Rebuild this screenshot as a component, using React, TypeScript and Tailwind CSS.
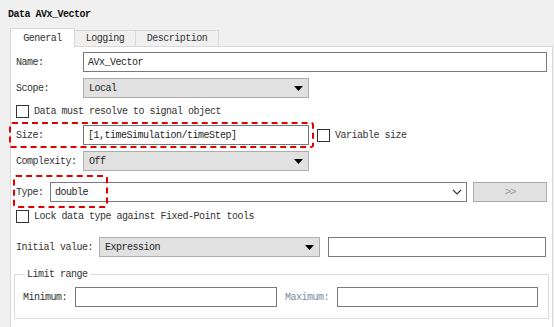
import { ReactNode } from 'react';

const mono = "font-['Liberation_Mono','DejaVu_Sans_Mono',monospace] text-[10px] tracking-[-0.5px]";

function Caret() {
  return (
    <svg width="9" height="5" viewBox="0 0 9 5" className="shrink-0">
      <path d="M0 0 H9 L4.5 5 Z" fill="#000" />
    </svg>
  );
}

function Chevron() {
  return (
    <svg width="10" height="6" viewBox="0 0 10 6" className="shrink-0">
      <path d="M1 1 L5 5 L9 1" fill="none" stroke="#333" strokeWidth="1.1" />
    </svg>
  );
}

function Select({ value, width }: { value: string; width: string }) {
  return (
    <div className={`${width} h-[20px] bg-[#e1e1e1] border border-[#adadad] flex items-center justify-between pl-[5px] pr-[5px] text-[#1f1f1f]`}>
      <span>{value}</span>
      <Caret />
    </div>
  );
}

function Input({ value, width }: { value?: string; width: string }) {
  return (
    <div className={`${width} h-[20px] bg-white border border-[#7a7a7a] flex items-center pl-[4px] text-[#1f1f1f]`}>
      {value}
    </div>
  );
}

function Check({ label }: { label: string }) {
  return (
    <div className="flex items-center h-[13px]">
      <div className="w-[13px] h-[13px] border border-[#333] bg-white" />
      <span className="ml-[5px] text-[#333]">{label}</span>
    </div>
  );
}

function Row({ label, children, mt }: { label: string; children: ReactNode; mt: string }) {
  return (
    <div className={`flex items-center ${mt}`}>
      <span className="w-[67px] text-[#333]">{label}</span>
      {children}
    </div>
  );
}

export default function App() {
  return (
    <div className={`w-[554px] h-[327px] bg-[#f0f0f0] overflow-hidden relative ${mono}`}>
      <div className="h-[28px] pl-[8px] pt-[7px] font-bold text-[#111]">Data AVx_Vector</div>

      {/* Tabs */}
      <div className="flex items-end h-[18px] pl-[10px] relative z-10">
        <div className="w-[65px] h-[19px] bg-white border border-b-0 border-[#d9d9d9] flex items-center justify-center text-[#333] -mb-px">
          General
        </div>
        <div className="w-[61px] h-[16px] border border-l-0 border-b-0 border-[#d9d9d9] flex items-center justify-center text-[#333]">
          Logging
        </div>
        <div className="w-[83px] h-[16px] border border-l-0 border-b-0 border-[#d9d9d9] flex items-center justify-center text-[#333]">
          Description
        </div>
      </div>

      {/* Panel */}
      <div className="ml-[10px] w-[543px] h-[300px] bg-white border border-[#d9d9d9] pl-[5px] pt-[5px]">
        <Row label="Name:" mt="mt-0">
          <Input value="AVx_Vector" width="w-[464px]" />
        </Row>
        <Row label="Scope:" mt="mt-[6px]">
          <Select value="Local" width="w-[226px]" />
        </Row>
        <div className="mt-[7px]">
          <Check label="Data must resolve to signal object" />
        </div>
        <Row label="Size:" mt="mt-[7px]">
          <Input value="[1,timeSimulation/timeStep]" width="w-[226px]" />
          <div className="ml-[8px]">
            <Check label="Variable size" />
          </div>
        </Row>
        <Row label="Complexity:" mt="mt-[6px]">
          <Select value="Off" width="w-[226px]" />
        </Row>
        <div className="flex items-center mt-[11px]">
          <span className="w-[34px] text-[#333]">Type:</span>
          <div className="w-[417px] h-[20px] bg-white border border-[#7a7a7a] flex items-center justify-between pl-[4px] pr-[4px] text-[#1f1f1f]">
            <span>double</span>
            <Chevron />
          </div>
          <div className="ml-[6px] w-[74px] h-[20px] bg-[#e1e1e1] border border-[#adadad] flex items-center justify-center text-[11px] tracking-[-1px] text-[#8a9bb0]">
            &gt;&gt;
          </div>
        </div>
        <div className="mt-[8px]">
          <Check label="Lock data type against Fixed-Point tools" />
        </div>
        <div className="flex items-center mt-[14px]">
          <span className="w-[83px] text-[#333]">Initial value:</span>
          <Select value="Expression" width="w-[221px]" />
          <div className="ml-[8px]">
            <Input width="w-[218px]" />
          </div>
        </div>

        {/* Limit range group */}
        <fieldset className="mt-[10px] ml-[-2px] w-[535px] h-[52px] border border-[#dcdcdc] pl-[8px] pr-0 pt-[5px]">
          <legend className="ml-[2px] px-[2px] text-[#333]">Limit range</legend>
          <div className="flex items-center">
            <span className="w-[52px] text-[#333]">Minimum:</span>
            <Input width="w-[202px]" />
            <span className="ml-[8px] w-[52px] text-[#7d8ca3]">Maximum:</span>
            <Input width="w-[201px]" />
          </div>
        </fieldset>
      </div>

      {/* Red dashed highlights */}
      <div className="absolute left-[9px] top-[122px] w-[305px] h-[26px] border-2 border-dashed border-[#e00000] rounded-[3px] pointer-events-none" />
      <div className="absolute left-[13px] top-[175px] w-[95px] h-[33px] border-2 border-dashed border-[#e00000] rounded-[3px] pointer-events-none" />
    </div>
  );
}
